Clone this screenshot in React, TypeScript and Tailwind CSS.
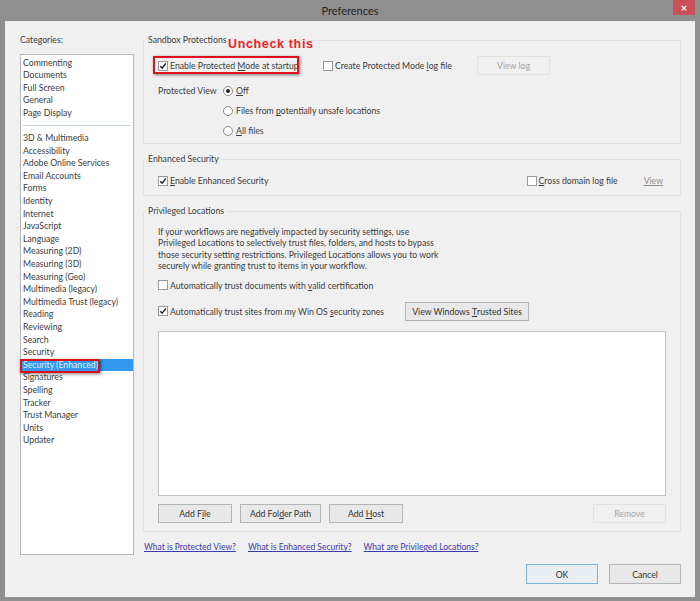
import type { ReactNode } from 'react'

const topItems = ['Commenting', 'Documents', 'Full Screen', 'General', 'Page Display']
const otherItems = [
  '3D & Multimedia', 'Accessibility', 'Adobe Online Services', 'Email Accounts', 'Forms', 'Identity',
  'Internet', 'JavaScript', 'Language', 'Measuring (2D)', 'Measuring (3D)', 'Measuring (Geo)',
  'Multimedia (legacy)', 'Multimedia Trust (legacy)', 'Reading', 'Reviewing', 'Search', 'Security',
  'Security (Enhanced)', 'Signatures', 'Spelling', 'Tracker', 'Trust Manager', 'Units', 'Updater',
]

function Check({ checked }: { checked?: boolean }) {
  return (
    <span className="flex h-[10px] w-[10px] shrink-0 items-center justify-center border border-[#9a9a9a] bg-white">
      {checked && (
        <svg viewBox="0 0 10 10" className="h-[8px] w-[8px]" fill="none" stroke="#222" strokeWidth={1.8}>
          <path d="M1.5 5.2 L4 7.8 L8.5 1.8" />
        </svg>
      )}
    </span>
  )
}

function Radio({ on }: { on?: boolean }) {
  return (
    <span className="flex h-[10px] w-[10px] shrink-0 items-center justify-center rounded-full border border-[#8a8a8a] bg-white">
      {on && <span className="h-[4px] w-[4px] rounded-full bg-[#222]" />}
    </span>
  )
}

function Btn({ children, w, off }: { children: ReactNode; w: string; off?: boolean }) {
  return (
    <div
      className={`flex h-[19px] items-center justify-center whitespace-pre border ${w} ${
        off ? 'border-[#e2e2e2] text-[#a5a5a5]' : 'border-[#b4b4b4] bg-[#e8e8e8] text-[#333]'
      }`}
    >
      {children}
    </div>
  )
}

function Group({ title, h, children }: { title: string; h: string; children: ReactNode }) {
  return (
    <fieldset className={`relative border border-[#e1e1e1] ${h}`}>
      <legend className="ml-[1px] px-[3px] leading-[12px]">{title}</legend>
      {children}
    </fieldset>
  )
}

export default function App() {
  return (
    <div className="flex h-[601px] w-[700px] flex-col overflow-hidden bg-[#8f8f8f] text-[8.7px] leading-[13px] text-[#3c3c3c] [font-family:Lato,sans-serif]">
      {/* title bar */}
      <div className="relative flex h-[21px] shrink-0 items-center justify-center text-[11px] text-[#222]">
        Preferences
        <div className="absolute right-[5px] top-0 flex h-[15px] w-[22px] items-center justify-center bg-[#c9505a] text-[11px] font-bold text-white">
          ×
        </div>
      </div>

      <div className="mx-[5px] flex h-[576px] shrink-0 bg-[#f0f0f0]">
        {/* categories */}
        <div className="ml-[15px] w-[114px] shrink-0">
          <div className="mt-[13px] h-[20px] leading-[12px]">Categories:</div>
          <div className="h-[501px] border border-[#b8b8b8] bg-white pt-[1.5px]">
            {topItems.map(t => (
              <div key={t} className="h-[12.6px] pl-[2px] leading-[12.6px]">{t}</div>
            ))}
            <div className="flex h-[12.6px] items-center px-[2px]">
              <div className="h-[1px] w-full bg-[#c5d6dc]" />
            </div>
            {otherItems.map(t =>
              t === 'Security (Enhanced)' ? (
                <div key={t} className="relative h-[12.6px] bg-[#3399ee] pl-[2px] leading-[12.6px] text-[#dff0ff]">
                  {t}
                  <span className="absolute left-[-1px] top-[0px] h-[14px] w-[80px] border-2 border-[#e00f1c] shadow-[1px_1px_3px_rgba(0,0,0,0.5)]" />
                </div>
              ) : (
                <div key={t} className="h-[12.6px] pl-[2px] leading-[12.6px]">{t}</div>
              )
            )}
          </div>
        </div>

        {/* right side */}
        <div className="ml-[9px] w-[538px] shrink-0">
          <div className="mt-[13px] flex flex-col gap-[9px]">
            <Group title="Sandbox Protections" h="h-[110px]">
              <div className="flex items-center pl-[14px] pt-[10px]">
                <div className="relative flex w-[165px] items-center gap-[2px]">
                  <Check checked />
                  <span>Enable Protected <u>M</u>ode at startup</span>
                  <span className="absolute left-[-5px] top-[-3px] h-[18px] w-[146px] border-2 border-[#e00f1c] shadow-[1px_1px_3px_rgba(0,0,0,0.5)]" />
                  <span className="absolute left-[70px] top-[-21px] whitespace-nowrap text-[12.5px] font-bold tracking-[0.65px] text-[#ee1c25] [font-family:'Liberation_Sans',sans-serif]">
                    Uncheck this
                  </span>
                </div>
                <div className="flex w-[154px] items-center gap-[2px]">
                  <Check />
                  <span>Create Protected Mode <u>l</u>og file</span>
                </div>
                <Btn w="w-[73px]" off>View log</Btn>
              </div>
              <div className="mt-[6px] flex pl-[14px]">
                <div className="w-[65px] pt-[3px]">Protected View</div>
                <div className="flex flex-col gap-[7px] pt-[3px]">
                  <div className="flex items-center gap-[3px]"><Radio on /><span><u>O</u>ff</span></div>
                  <div className="flex items-center gap-[3px]"><Radio /><span>Files from <u>p</u>otentially unsafe locations</span></div>
                  <div className="flex items-center gap-[3px]"><Radio /><span><u>A</u>ll files</span></div>
                </div>
              </div>
            </Group>

            <Group title="Enhanced Security" h="h-[43px]">
              <div className="flex items-center pl-[14px] pr-[17px] pt-[9px]">
                <Check checked />
                <span className="ml-[2px]"><u>E</u>nable Enhanced Security</span>
                <div className="ml-auto flex items-center gap-[2px]">
                  <Check />
                  <span><u>C</u>ross domain log file</span>
                </div>
                <span className="ml-[26px] text-[#8c8c8c] underline">View</span>
              </div>
            </Group>

            <Group title="Privileged Locations" h="h-[327px]">
              <div className="px-[14px]">
                <p className="mt-[9px] leading-[11.4px]">
                  If your workflows are negatively impacted by security settings, use<br />
                  Privileged Locations to selectively trust files, folders, and hosts to bypass<br />
                  those security setting restrictions. Privileged Locations allows you to work<br />
                  securely while granting trust to items in your workflow.
                </p>
                <div className="mt-[7px] flex items-center gap-[2px]">
                  <Check />
                  <span>Automatically trust documents with <u>v</u>alid certification</span>
                </div>
                <div className="mt-[10px] flex items-center">
                  <Check checked />
                  <span className="ml-[2px] w-[235px] whitespace-nowrap">Automatically trust sites from my Win OS <u>s</u>ecurity zones</span>
                  <Btn w="w-[124px]">View Windows <u>T</u>rusted Sites</Btn>
                </div>
                <div className="mt-[10px] h-[165px] w-[508px] border border-[#c4c4c4] bg-white" />
                <div className="mt-[8px] flex w-[508px]">
                  <Btn w="w-[74px]">Add F<u>i</u>le</Btn>
                  <div className="ml-[8px]"><Btn w="w-[81px]">Add Fol<u>d</u>er Path</Btn></div>
                  <div className="ml-[8px]"><Btn w="w-[74px]">Add <u>H</u>ost</Btn></div>
                  <div className="ml-auto"><Btn w="w-[73px]" off>Remove</Btn></div>
                </div>
              </div>
            </Group>
          </div>

          <div className="mt-[9px] flex gap-[12px] pl-[1px] text-[8.5px] leading-[12px] text-[#3b3bb0] underline">
            <span>What is Protected View?</span>
            <span>What is Enhanced Security?</span>
            <span>What are Privileged Locations?</span>
          </div>

          <div className="mt-[11px] flex justify-end gap-[11px]">
            <div className="flex h-[20px] w-[72px] items-center justify-center border border-[#7fb6d8] bg-[#e8eef2] text-[#333]">OK</div>
            <div className="flex h-[20px] w-[72px] items-center justify-center border border-[#b4b4b4] bg-[#e8e8e8] text-[#333]">Cancel</div>
          </div>
        </div>
      </div>
    </div>
  )
}
